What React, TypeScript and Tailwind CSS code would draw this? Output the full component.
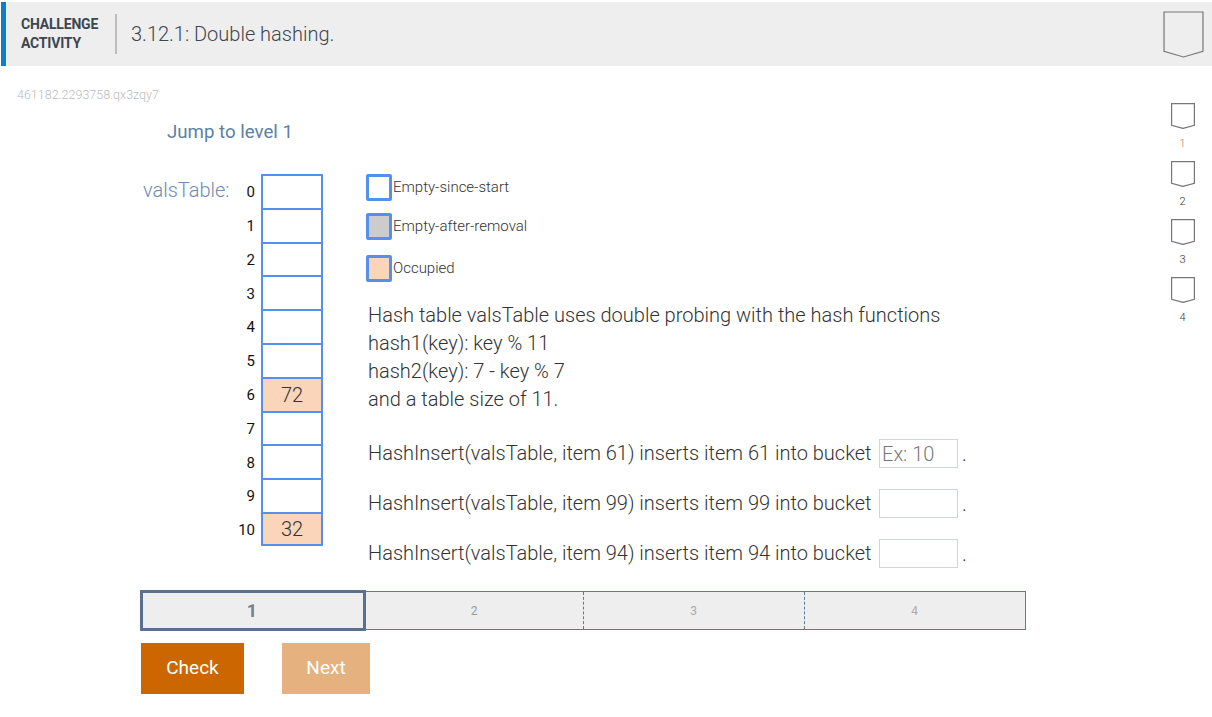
const roboto = "font-['Roboto',sans-serif]";

const Shield = ({ className }: { className: string }) => (
  <svg className={className} viewBox="0 0 40 46" fill="none" preserveAspectRatio="none">
    <path
      d="M1 39.5V1H39V39.5L20 45L1 39.5Z"
      stroke="#777"
      strokeWidth="1.2"
      vectorEffect="non-scaling-stroke"
    />
  </svg>
);

const cells: Record<number, string> = { 6: "72", 10: "32" };
const buckets = [0, 1, 2, 3, 4, 5, 6, 7, 8, 9, 10];

const HashTable = () => (
  <div className="flex items-start">
    <div className={`ml-[3px] w-[91px] pt-[4px] text-[20px] leading-[24px] font-light text-[#6e8bb0] ${roboto}`}>
      valsTable:
    </div>
    <div className="flex flex-col">
      {buckets.map((b) => (
        <div key={b} className="flex h-[33.8px] items-center">
          <div className={`w-[27px] pt-[3px] pr-[6px] text-right text-[15px] text-[#111] ${roboto}`}>{b}</div>
          <div
            className={`flex w-[62px] items-center justify-center border-2 border-[#5590ee] text-[20px] font-light text-[#333] ${roboto} ${
              b === 10 ? "h-[33.8px]" : "-mb-[2px] h-[35.8px]"
            } ${cells[b] ? "bg-[#fbd5ba]" : "bg-white"}`}
          >
            {cells[b]}
          </div>
        </div>
      ))}
    </div>
  </div>
);

const Legend = ({ color, label, className }: { color: string; label: string; className: string }) => (
  <div className={`flex items-center ${className}`}>
    <div className={`h-[27px] w-[26px] rounded-[2px] border-[3px] border-[#5590ee] ${color}`} />
    <span className={`ml-[1px] text-[15px] font-light text-[#333] ${roboto}`}>{label}</span>
  </div>
);

const Question = ({ item, placeholder }: { item: number; placeholder?: string }) => (
  <div className={`flex h-[29px] items-center text-[20px] font-light text-[#333] ${roboto}`}>
    <span className="-mt-[1px] w-[511px] whitespace-nowrap">
      HashInsert(valsTable, item {item}) inserts item {item} into bucket
    </span>
    <input
      readOnly
      placeholder={placeholder}
      className="h-[29px] w-[79px] border border-[#ced6da] bg-white px-[2px] text-[20px] font-light placeholder:text-[#777]"
    />
    <span className="ml-[4px]">.</span>
  </div>
);

const levels = [
  { n: 2, w: "w-[218px]", color: "text-[#999]", line: "border-r border-dashed border-r-[#5b7a9d]" },
  { n: 3, w: "w-[221px]", color: "text-[#aaa]", line: "border-r border-dashed border-r-[#5b7a9d]" },
  { n: 4, w: "flex-1", color: "text-[#b5a89c]", line: "" },
];

const LevelBar = () => (
  <div className="mt-[44px] flex h-[41px] w-[886px] items-center">
    <div className={`flex h-[41px] w-[226px] shrink-0 items-center justify-center border-[3px] border-[#5b6f8f] bg-[#eeeeee] pr-[2px] text-[18px] font-bold text-[#74808f] ${roboto}`}>
      1
    </div>
    <div className="flex h-[39px] flex-1 border-y border-r border-[#5b7a9d] bg-[#eeeeee]">
      {levels.map((l) => (
        <div key={l.n} className={`flex ${l.w} items-center justify-center pr-[1px] text-[12px] ${l.color} ${l.line} ${roboto}`}>
          {l.n}
        </div>
      ))}
    </div>
  </div>
);

const steps = [
  { n: 1, color: "text-[#c9785a]" },
  { n: 2, color: "text-[#333]" },
  { n: 3, color: "text-[#333]" },
  { n: 4, color: "text-[#333]" },
];

export default function App() {
  return (
    <div className="h-[717px] w-[1212px] overflow-hidden bg-white">
      <header className="mt-[2px] ml-[1px] flex h-[64px] items-center border-l-[5px] border-[#0a81c7] bg-[#eeeeee] pr-[8px]">
        <div className={`ml-[15px] w-[94px] text-[14px] leading-[19px] font-bold tracking-[-0.2px] text-[#3c4650] ${roboto}`}>
          CHALLENGE
          <br />
          ACTIVITY
        </div>
        <div className="h-[40px] w-[2px] bg-[#bdbdbd]" />
        <h1 className={`ml-[14px] flex-1 text-[20px] font-light text-[#3c4650] ${roboto}`}>3.12.1: Double hashing.</h1>
        <Shield className="h-[47px] w-[41px]" />
      </header>

      <div className="flex">
        <main className="flex-1">
          <div className={`mt-[21px] ml-[17px] text-[12.5px] leading-[16px] font-light text-[#bbb] ${roboto}`}>
            461182.2293758.qx3zqy7
          </div>
          <div className={`mt-[17px] ml-[167px] text-[18.67px] leading-[24px] text-[#5d7fa5] ${roboto}`}>Jump to level 1</div>

          <div className="mt-[30px] ml-[140px] flex h-[372px]">
            <HashTable />
            <div className="ml-[43px] flex flex-col">
              <Legend color="bg-white" label="Empty-since-start" className="" />
              <Legend color="bg-[#cccccc]" label="Empty-after-removal" className="mt-[12px]" />
              <Legend color="bg-[#fbd5ba]" label="Occupied" className="mt-[15px]" />
              <p className={`mt-[19px] ml-[2px] text-[20px] leading-[28px] font-light text-[#333] ${roboto}`}>
                Hash table valsTable uses double probing with the hash functions
                <br />
                hash1(key): key % 11
                <br />
                hash2(key): 7 - key % 7
                <br />
                and a table size of 11.
              </p>
              <div className="mt-[26px] ml-[2px] flex flex-col gap-[21px]">
                <Question item={61} placeholder="Ex: 10" />
                <Question item={99} />
                <Question item={94} />
              </div>
            </div>
          </div>

          <div className="ml-[140px]">
            <LevelBar />
            <div className={`mt-[12px] ml-[1px] flex gap-[38px] text-[19px] text-white ${roboto}`}>
              <button className="h-[51px] w-[103px] bg-[#cc6600]">Check</button>
              <button className="h-[51px] w-[88px] bg-[#e5b17f]">Next</button>
            </div>
          </div>
        </main>

        <aside className="mt-[37px] mr-[17px] flex w-[25px] flex-col items-center gap-[11px]">
          {steps.map((s) => (
            <div key={s.n} className="flex flex-col items-center">
              <Shield className="h-[26px] w-[24px]" />
              <span className={`mt-[9px] text-[11px] leading-[12px] font-light ${s.color} ${roboto}`}>{s.n}</span>
            </div>
          ))}
        </aside>
      </div>
    </div>
  );
}
